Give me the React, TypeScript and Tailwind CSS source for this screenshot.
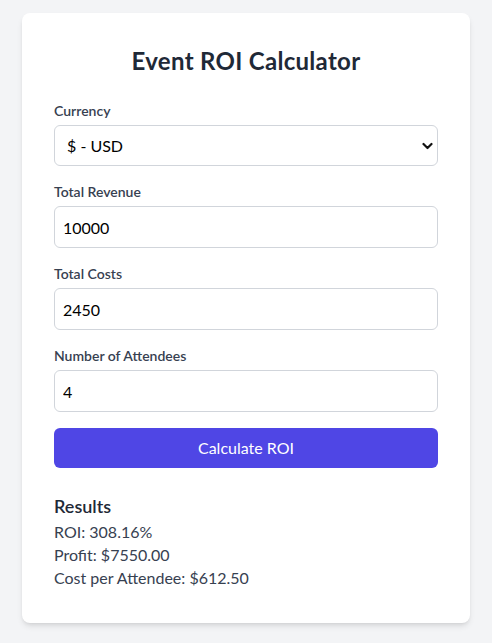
import React, { useState } from 'react';

const font = { fontFamily: 'Lato, "Noto Sans", sans-serif' };

export default function App() {
  const [currency, setCurrency] = useState('USD');
  const [revenue, setRevenue] = useState('10000');
  const [costs, setCosts] = useState('2450');
  const [attendees, setAttendees] = useState('4');

  const rev = parseFloat(revenue) || 0;
  const cost = parseFloat(costs) || 0;
  const att = parseFloat(attendees) || 0;
  const profit = rev - cost;
  const roi = cost ? (profit / cost) * 100 : 0;
  const perAttendee = att ? cost / att : 0;

  const fields = [
    { label: 'Total Revenue', value: revenue, set: setRevenue },
    { label: 'Total Costs', value: costs, set: setCosts },
    { label: 'Number of Attendees', value: attendees, set: setAttendees },
  ];

  return (
    <div className="min-h-screen bg-[#f3f4f6] pt-[13px]" style={font}>
      <div className="mx-auto w-[448px] rounded-lg bg-white px-8 pb-[34px] pt-8 shadow-md">
        <h1 className="mb-6 text-center text-2xl font-bold tracking-[0.3px] text-[#1f2937]">Event ROI Calculator</h1>
        <div className="mb-4">
          <label className="mb-1 block text-sm font-semibold text-[#374151]">Currency</label>
          <div className="relative">
            <select
              value={currency}
              onChange={(e) => setCurrency(e.target.value)}
              className="block h-[41px] w-full appearance-none rounded-md border border-[#d1d5db] bg-white pl-3 pr-8 text-base text-black"
            >
              <option value="USD">$ - USD</option>
              <option value="EUR">€ - EUR</option>
              <option value="GBP">£ - GBP</option>
            </select>
            <svg className="pointer-events-none absolute right-[5px] top-1/2 h-[8px] w-[11px] -translate-y-1/2" viewBox="0 0 11 8" fill="none">
              <path d="M1.5 2l4 4 4-4" stroke="#111" strokeWidth="2.2" strokeLinecap="round" strokeLinejoin="round" />
            </svg>
          </div>
        </div>
        {fields.map((f) => (
          <div key={f.label} className="mb-4">
            <label className="mb-1 block text-sm font-semibold text-[#374151]">{f.label}</label>
            <input
              type="number"
              value={f.value}
              onChange={(e) => f.set(e.target.value)}
              className="block h-[42px] w-full rounded-md border border-[#d1d5db] px-2 text-base text-black"
            />
          </div>
        ))}
        <button className="h-10 w-full rounded-md bg-[#4f46e5] text-base text-white">Calculate ROI</button>
        <div className="mt-6">
          <h2 className="text-lg font-semibold text-[#1f2937]">Results</h2>
          <p className="leading-[23px] text-[#374151]">ROI: {roi.toFixed(2)}%</p>
          <p className="leading-[23px] text-[#374151]">Profit: ${profit.toFixed(2)}</p>
          <p className="leading-[23px] text-[#374151]">Cost per Attendee: ${perAttendee.toFixed(2)}</p>
        </div>
      </div>
    </div>
  );
}
